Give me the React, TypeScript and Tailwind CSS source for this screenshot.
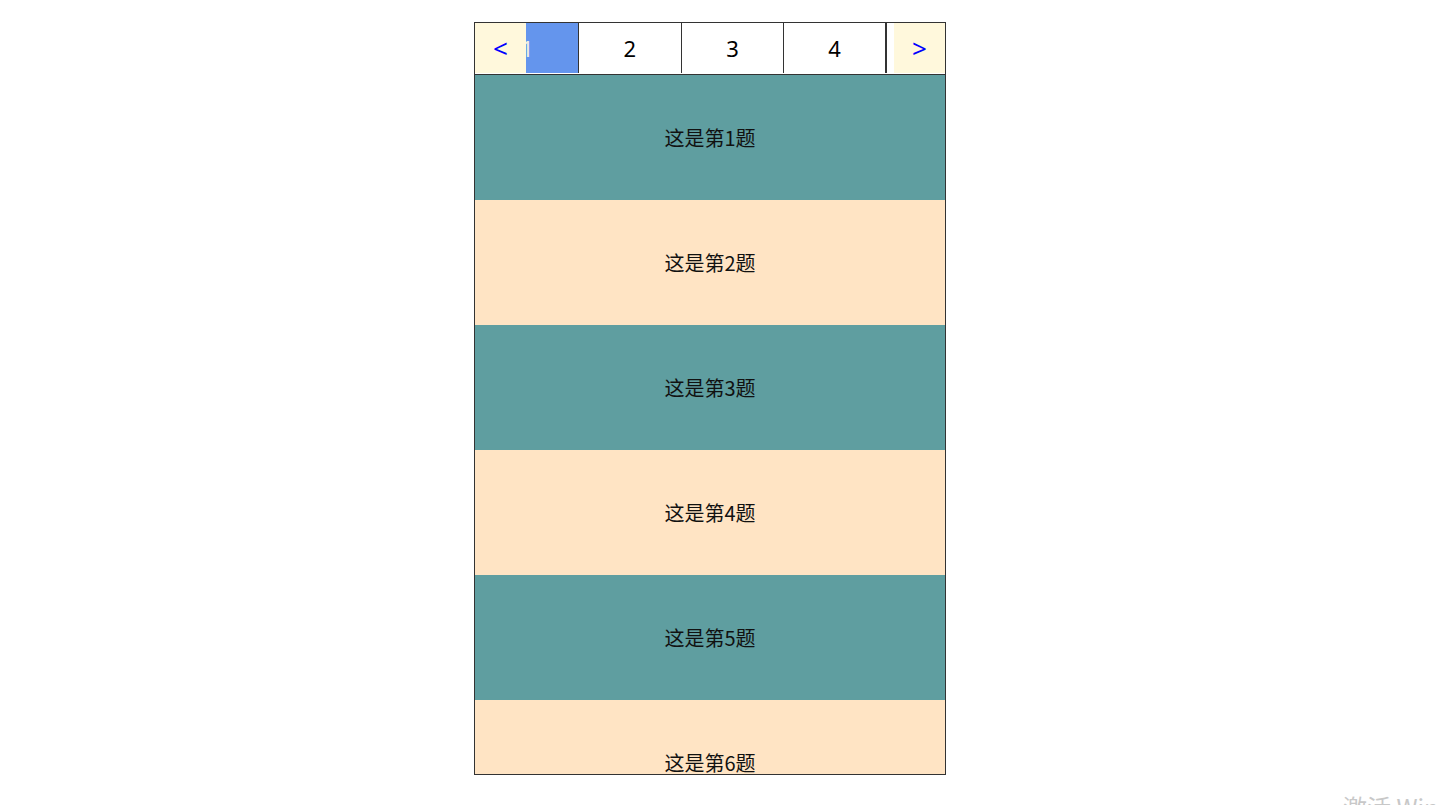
import React from "react";

const questions = [1, 2, 3, 4, 5, 6, 7, 8];

const App: React.FC = () => {
    return (
        <div
            className="relative w-[1438px] h-[805px] overflow-hidden bg-white"
            style={{ fontFamily: '"Noto Sans", "Noto Sans CJK SC", sans-serif' }}
        >
            <div className="ml-[474px] mt-[22px] w-[472px] h-[753px] border border-[#333] overflow-hidden flex flex-col">
                {/* tab bar */}
                <div className="flex items-start h-[52px] shrink-0 border-b border-[#333] bg-white">
                    <button className="w-[51px] h-[50px] shrink-0 bg-[#fff8dc] text-[#0000ff] text-[26px] leading-none flex items-center justify-center">
                        &lt;
                    </button>
                    <div className="flex w-[368px] h-[50px] shrink-0 overflow-hidden bg-white">
                        {[1, 2, 3, 4].map((n) => (
                            <div
                                key={n}
                                className={`w-[102.67px] shrink-0 border-[#333] flex items-center justify-center text-[22px] ${
                                    n === 4 ? "border-r-2" : "border-r"
                                } ${n === 1 ? "ml-[-49.67px] bg-[#6495ed] text-[#f0f0e0]" : "bg-white text-black"}`}
                            >
                                {n}
                            </div>
                        ))}
                    </div>
                    <button className="w-[51px] h-[50px] shrink-0 bg-[#fff8dc] text-[#0000ff] text-[26px] leading-none flex items-center justify-center">
                        &gt;
                    </button>
                </div>

                {/* question list */}
                <div className="flex-1 overflow-hidden">
                    {questions.map((q) => (
                        <div
                            key={q}
                            className={`h-[125px] flex items-center justify-center text-[20px] text-[#111] ${
                                q % 2 === 1 ? "bg-[#5f9ea0]" : "bg-[#ffe4c4]"
                            }`}
                            style={{ fontFamily: '"Noto Sans CJK SC", sans-serif' }}
                        >
                            这是第{q}题
                        </div>
                    ))}
                </div>
            </div>

            <div
                className="absolute left-[1343px] top-[789px] text-[24px] text-[#c8c8c8] whitespace-nowrap"
                style={{ fontFamily: '"Noto Sans CJK SC", sans-serif' }}
            >
                激活 Windows
            </div>
        </div>
    );
};

export default App;
